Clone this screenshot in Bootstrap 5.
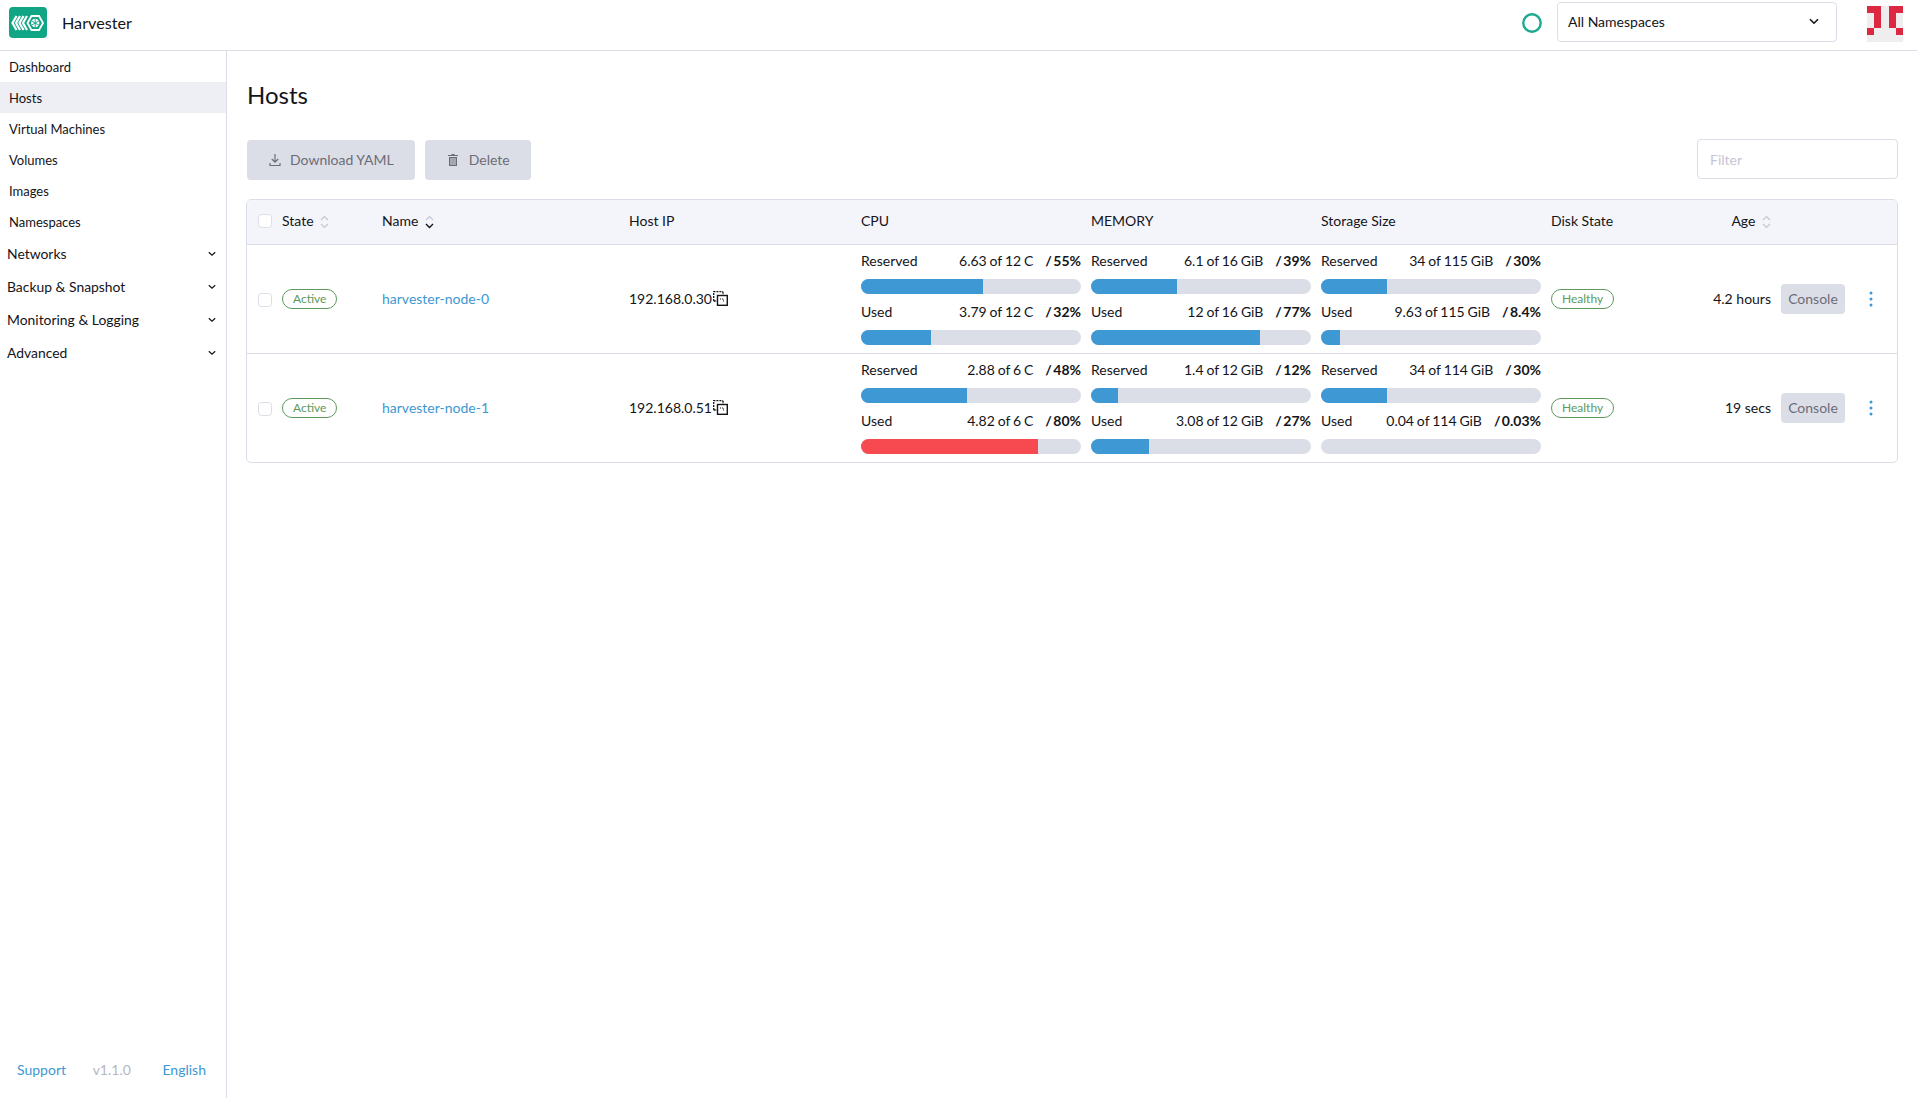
<!DOCTYPE html>
<html lang="en">
<head>
  <meta charset="UTF-8" />
  <meta name="viewport" content="width=device-width, initial-scale=1.0"/>
  <title>Hosts - Harvester</title>
  <link href="https://cdn.jsdelivr.net/npm/bootstrap@5.3.2/dist/css/bootstrap.min.css" rel="stylesheet">
  <style>
    body {
      font-family: "Lato", "Liberation Sans", sans-serif;
      font-size: 14px;
      line-height: 21px;
      color: #141419;
      background: #fff;
      height: 100vh;
      overflow: hidden;
    }
    a { color: #3d98d3; text-decoration: none; }

    /* top bar */
    .top-bar {
      height: 51px;
      border-bottom: 1px solid #dcdee7;
      padding: 0 14px 5px 9px;
    }
    .brand { font-size: 16.2px; color: #141419; margin-left: 15px; }
    .logo { width: 38px; height: 31px; }
    .ns-select {
      width: 280px;
      height: 40px;
      margin: 0 30px 2px 15px;
      padding: 0 17px 0 10px;
      font-size: 14px;
      color: #141419;
      border: 1px solid #dcdee7;
      border-radius: 4px;
    }
    .avatar { width: 36px; height: 36px; margin-top: 2px; }

    /* side menu */
    .side-menu {
      width: 227px;
      flex: none;
      border-right: 1px solid #dcdee7;
    }
    .side-menu .nav-link {
      height: 31px;
      padding: 6px 9px 4px;
      color: #141419;
      font-size: 13px;
    }
    .side-menu .nav-link.active { background: #eeeff4; }
    .side-menu .nav-group {
      height: 33px;
      padding: 6px 10px 6px 7px;
      color: #141419;
      font-size: 13.9px;
    }
    .side-foot { padding: 0 20px 18px 17px; }
    .side-foot .version { color: #b6b6c2; margin-right: 5px; }

    /* page body */
    .page { padding: 0 19px 0 20px; min-width: 0; }
    .page-title { font-size: 24px; line-height: 30px; font-weight: 400; margin: 29px 0 29px; }
    .btn-muted, .btn-muted:disabled {
      height: 40px;
      padding: 0 21px 1px;
      font-size: 14px;
      color: #6c6c76;
      background: #dcdee7;
      border: 0;
      border-radius: 4px;
      opacity: 1;
    }
    .btn-muted svg { margin-right: 8px; flex: none; }
    .btn-muted svg.trash { margin-right: 9px; }
    .toolbar-btn { margin-top: 1px; gap: 10px; }
    .filter-box { width: 201px; height: 40px; font-size: 14px; border-color: #dcdee7; border-radius: 4px; padding: 0 12px; }
    .filter-box::placeholder { color: #c5c6d3; }

    /* hosts table */
    .hosts-wrap {
      margin: 19px 0 0 -1px;
      border: 1px solid #dcdee7;
      border-radius: 5px;
      overflow: hidden;
    }
    .hosts-table { table-layout: fixed; width: 1650px; margin: 0; font-size: 14px; }
    .hosts-table th, .hosts-table td { padding: 0 5px; border-color: #dcdee7; color: #141419; }
    .hosts-table th { height: 44px; padding-bottom: 2px; font-weight: 400; background: #f4f5fa; vertical-align: middle; }
    .hosts-table td { height: 109px; vertical-align: middle; }
    .hosts-table tr:last-child td { height: 109px; border-bottom: 0; }
    .hosts-table td.metric { vertical-align: top; padding-top: 5px; }
    .tick { width: 14px; height: 14px; margin: 0 0 0 6px; border-color: #dcdee7; border-radius: 3px; display: block; }
    td .tick { margin-top: 2px; }
    .sort { width: 9px; height: 14px; margin-left: 3px; vertical-align: -3px; }

    .stat { height: 29px; word-spacing: -.7px; }
    .stat .pct { font-weight: 700; margin-left: 12px; word-spacing: -2px; }
    .hosts-table .progress { height: 15px; border-radius: 8px; background: #dcdee7; margin-bottom: 7px; }
    .progress-bar { background: #3d98d3; }
    .progress-bar.over { background: #f64a50; }

    .state-pill {
      display: inline-block;
      height: 20px;
      padding: 0 10px;
      font-size: 12px;
      font-weight: 400;
      line-height: 18px;
      color: #5d995d;
      background: #fff;
      border: 1px solid #5d995d;
      border-radius: 10px;
      vertical-align: 1px;
    }
    .copy-icon { width: 15px; height: 15px; margin-left: 1px; vertical-align: -2px; }
    .btn-muted.btn-console { height: 30px; width: 64px; padding: 0; }
    .dots { display: block; width: 4px; height: 16px; margin-left: 14px; }
  </style>
</head>
<body class="d-flex flex-column">

  <header class="top-bar d-flex align-items-center flex-none">
    <svg class="logo" viewBox="0 0 38 31">
      <rect width="38" height="31" rx="4" fill="#10a585"/>
      <g fill="none" stroke="#fff" stroke-width="2.2">
        <path d="M7.500 9 L3.500 16 L7.500 23"/>
        <path d="M11 9 L7 16 L11 23"/>
        <path d="M14.500 9 L10.500 16 L14.500 23"/>
        <path d="M18 9 L14 16 L18 23"/>
        <path stroke-width="1.8" d="M22.500 9 H30 L34 16 L30 23 H22.500 L18.500 16 Z"/>
      </g>
      <circle cx="26.200" cy="16" r="4.200" fill="#fff"/>
      <path d="M26.200 11.500V20.500M22.300 13.700L30.100 18.300M22.300 18.300L30.100 13.700" stroke="#10a585" stroke-width=".9"/>
    </svg>
    <span class="brand">Harvester</span>
    <svg class="ms-auto" width="20" height="20" viewBox="0 0 20 20">
      <circle cx="10" cy="10" r="8.7" fill="none" stroke="#1ba98f" stroke-width="2.4"/>
    </svg>
    <div class="ns-select d-flex align-items-center justify-content-between">
      <span>All Namespaces</span>
      <svg width="10" height="7" viewBox="0 0 10 7"><path d="M1 1.2 L5 5.2 L9 1.2" fill="none" stroke="#141419" stroke-width="1.6"/></svg>
    </div>
    <svg class="avatar" viewBox="0 0 5 5" shape-rendering="crispEdges">
      <rect width="5" height="5" fill="#eeeeee"/>
      <path fill="#dc2840" d="M0 0H2V3H1V1H0ZM3 0H5V1H4V3H3ZM0 3H1V4H0ZM4 3H5V4H4Z"/>
    </svg>
  </header>

  <div class="d-flex flex-grow-1" style="min-height:0">
    <aside class="side-menu d-flex flex-column">
      <nav class="nav flex-column">
        <a class="nav-link" href="#">Dashboard</a>
        <a class="nav-link active" href="#">Hosts</a>
        <a class="nav-link" href="#">Virtual Machines</a>
        <a class="nav-link" href="#">Volumes</a>
        <a class="nav-link" href="#">Images</a>
        <a class="nav-link" href="#">Namespaces</a>
        <a class="nav-group d-flex align-items-center justify-content-between" href="#">Networks
          <svg width="8" height="6" viewBox="0 0 8 6"><path d="M.8 1.2 L4 4.2 L7.2 1.2" fill="none" stroke="#141419" stroke-width="1.2"/></svg></a>
        <a class="nav-group d-flex align-items-center justify-content-between" href="#">Backup &amp; Snapshot
          <svg width="8" height="6" viewBox="0 0 8 6"><path d="M.8 1.2 L4 4.2 L7.2 1.2" fill="none" stroke="#141419" stroke-width="1.2"/></svg></a>
        <a class="nav-group d-flex align-items-center justify-content-between" href="#">Monitoring &amp; Logging
          <svg width="8" height="6" viewBox="0 0 8 6"><path d="M.8 1.2 L4 4.2 L7.2 1.2" fill="none" stroke="#141419" stroke-width="1.2"/></svg></a>
        <a class="nav-group d-flex align-items-center justify-content-between" href="#">Advanced
          <svg width="8" height="6" viewBox="0 0 8 6"><path d="M.8 1.2 L4 4.2 L7.2 1.2" fill="none" stroke="#141419" stroke-width="1.2"/></svg></a>
      </nav>
      <div class="side-foot mt-auto d-flex justify-content-between">
        <a href="#">Support</a>
        <span class="version">v1.1.0</span>
        <a href="#">English</a>
      </div>
    </aside>

    <main class="page flex-grow-1">
      <h1 class="page-title">Hosts</h1>

      <div class="d-flex justify-content-between align-items-start">
        <div class="d-flex toolbar-btn">
          <button class="btn btn-muted d-flex align-items-center" disabled>
            <svg width="14" height="14" viewBox="0 0 14 14"><path d="M7 1V9M3.8 6L7 9.2 10.2 6M2 10V12.5H12V10" fill="none" stroke="#6c6c76" stroke-width="1.2"/></svg>
            <span>Download YAML</span>
          </button>
          <button class="btn btn-muted d-flex align-items-center" disabled>
            <svg class="trash" width="14" height="14" viewBox="0 0 14 14"><path fill="#6c6c76" fill-rule="evenodd" d="M5.500 1H8.500V2H12V3H2V2H5.500ZM3 4H11V13H3ZM4.500 5V12H5.500V5ZM6.500 5V12H7.500V5ZM8.500 5V12H9.500V5Z"/></svg>
            <span>Delete</span>
          </button>
        </div>
        <input class="form-control filter-box" type="text" placeholder="Filter">
      </div>

      <div class="hosts-wrap">
        <table class="table hosts-table">
          <colgroup>
            <col style="width:30px"><col style="width:100px"><col style="width:247px"><col style="width:232px">
            <col style="width:230px"><col style="width:230px"><col style="width:230px">
            <col style="width:120px"><col style="width:110px"><col style="width:74px"><col style="width:47px">
          </colgroup>
          <thead>
            <tr>
              <th><input class="form-check-input tick" type="checkbox"></th>
              <th>State <svg class="sort" viewBox="0 0 9 14"><path d="M1 5L4.500 1.500 8 5M1 9L4.500 12.500 8 9" fill="none" stroke="#c5c6cf" stroke-width="1.2"/></svg></th>
              <th>Name <svg class="sort" viewBox="0 0 9 14"><path d="M1 5L4.500 1.500 8 5" fill="none" stroke="#c5c6cf" stroke-width="1.2"/><path d="M1 9L4.500 12.500 8 9" fill="none" stroke="#141419" stroke-width="1.4"/></svg></th>
              <th>Host IP</th>
              <th>CPU</th>
              <th>MEMORY</th>
              <th>Storage Size</th>
              <th>Disk State</th>
              <th class="text-end">Age <svg class="sort" viewBox="0 0 9 14"><path d="M1 5L4.500 1.500 8 5M1 9L4.500 12.500 8 9" fill="none" stroke="#c5c6cf" stroke-width="1.2"/></svg></th>
              <th></th>
              <th></th>
            </tr>
          </thead>
          <tbody>
            <tr>
              <td><input class="form-check-input tick" type="checkbox"></td>
              <td><span class="state-pill">Active</span></td>
              <td><a href="#">harvester-node-0</a></td>
              <td>192.168.0.30<svg class="copy-icon" viewBox="0 0 15 15"><path d="M.7 10V.7H10" fill="none" stroke="#141419" stroke-width="1.300" stroke-dasharray="2 1"/><path d="M10 .7V4M.7 10H4" fill="none" stroke="#141419" stroke-width="1.300" stroke-dasharray="2 1"/><rect x="4.500" y="4.500" width="9.800" height="9.800" fill="#fff" stroke="#141419" stroke-width="1.400"/><path d="M7 8H10.500V11" fill="none" stroke="#141419" stroke-dasharray="1 1"/></svg></td>
              <td class="metric">
                <div class="stat d-flex"><span class="me-auto">Reserved</span><span>6.63 of 12 C</span><span class="pct">/ 55%</span></div>
                <div class="progress"><div class="progress-bar" style="width:55.3%"></div></div>
                <div class="stat d-flex"><span class="me-auto">Used</span><span>3.79 of 12 C</span><span class="pct">/ 32%</span></div>
                <div class="progress"><div class="progress-bar" style="width:31.6%"></div></div>
              </td>
              <td class="metric">
                <div class="stat d-flex"><span class="me-auto">Reserved</span><span>6.1 of 16 GiB</span><span class="pct">/ 39%</span></div>
                <div class="progress"><div class="progress-bar" style="width:39%"></div></div>
                <div class="stat d-flex"><span class="me-auto">Used</span><span>12 of 16 GiB</span><span class="pct">/ 77%</span></div>
                <div class="progress"><div class="progress-bar" style="width:77%"></div></div>
              </td>
              <td class="metric">
                <div class="stat d-flex"><span class="me-auto">Reserved</span><span>34 of 115 GiB</span><span class="pct">/ 30%</span></div>
                <div class="progress"><div class="progress-bar" style="width:30%"></div></div>
                <div class="stat d-flex"><span class="me-auto">Used</span><span>9.63 of 115 GiB</span><span class="pct">/ 8.4%</span></div>
                <div class="progress"><div class="progress-bar" style="width:8.8%"></div></div>
              </td>
              <td><span class="state-pill">Healthy</span></td>
              <td class="text-end">4.2 hours</td>
              <td><button class="btn btn-muted btn-console" disabled>Console</button></td>
              <td><svg class="dots" viewBox="0 0 4 16"><circle cx="2" cy="2" r="1.500" fill="#3d98d3"/><circle cx="2" cy="8" r="1.500" fill="#3d98d3"/><circle cx="2" cy="14" r="1.500" fill="#3d98d3"/></svg></td>
            </tr>
            <tr>
              <td><input class="form-check-input tick" type="checkbox"></td>
              <td><span class="state-pill">Active</span></td>
              <td><a href="#">harvester-node-1</a></td>
              <td>192.168.0.51<svg class="copy-icon" viewBox="0 0 15 15"><path d="M.7 10V.7H10" fill="none" stroke="#141419" stroke-width="1.300" stroke-dasharray="2 1"/><path d="M10 .7V4M.7 10H4" fill="none" stroke="#141419" stroke-width="1.300" stroke-dasharray="2 1"/><rect x="4.500" y="4.500" width="9.800" height="9.800" fill="#fff" stroke="#141419" stroke-width="1.400"/><path d="M7 8H10.500V11" fill="none" stroke="#141419" stroke-dasharray="1 1"/></svg></td>
              <td class="metric">
                <div class="stat d-flex"><span class="me-auto">Reserved</span><span>2.88 of 6 C</span><span class="pct">/ 48%</span></div>
                <div class="progress"><div class="progress-bar" style="width:48%"></div></div>
                <div class="stat d-flex"><span class="me-auto">Used</span><span>4.82 of 6 C</span><span class="pct">/ 80%</span></div>
                <div class="progress"><div class="progress-bar over" style="width:80.5%"></div></div>
              </td>
              <td class="metric">
                <div class="stat d-flex"><span class="me-auto">Reserved</span><span>1.4 of 12 GiB</span><span class="pct">/ 12%</span></div>
                <div class="progress"><div class="progress-bar" style="width:12.4%"></div></div>
                <div class="stat d-flex"><span class="me-auto">Used</span><span>3.08 of 12 GiB</span><span class="pct">/ 27%</span></div>
                <div class="progress"><div class="progress-bar" style="width:26.5%"></div></div>
              </td>
              <td class="metric">
                <div class="stat d-flex"><span class="me-auto">Reserved</span><span>34 of 114 GiB</span><span class="pct">/ 30%</span></div>
                <div class="progress"><div class="progress-bar" style="width:30%"></div></div>
                <div class="stat d-flex"><span class="me-auto">Used</span><span>0.04 of 114 GiB</span><span class="pct">/ 0.03%</span></div>
                <div class="progress"><div class="progress-bar" style="width:0.03%"></div></div>
              </td>
              <td><span class="state-pill">Healthy</span></td>
              <td class="text-end">19 secs</td>
              <td><button class="btn btn-muted btn-console" disabled>Console</button></td>
              <td><svg class="dots" viewBox="0 0 4 16"><circle cx="2" cy="2" r="1.500" fill="#3d98d3"/><circle cx="2" cy="8" r="1.500" fill="#3d98d3"/><circle cx="2" cy="14" r="1.500" fill="#3d98d3"/></svg></td>
            </tr>
          </tbody>
        </table>
      </div>
    </main>
  </div>

  <script src="https://cdn.jsdelivr.net/npm/bootstrap@5.3.2/dist/js/bootstrap.bundle.min.js"></script>
</body>
</html>
